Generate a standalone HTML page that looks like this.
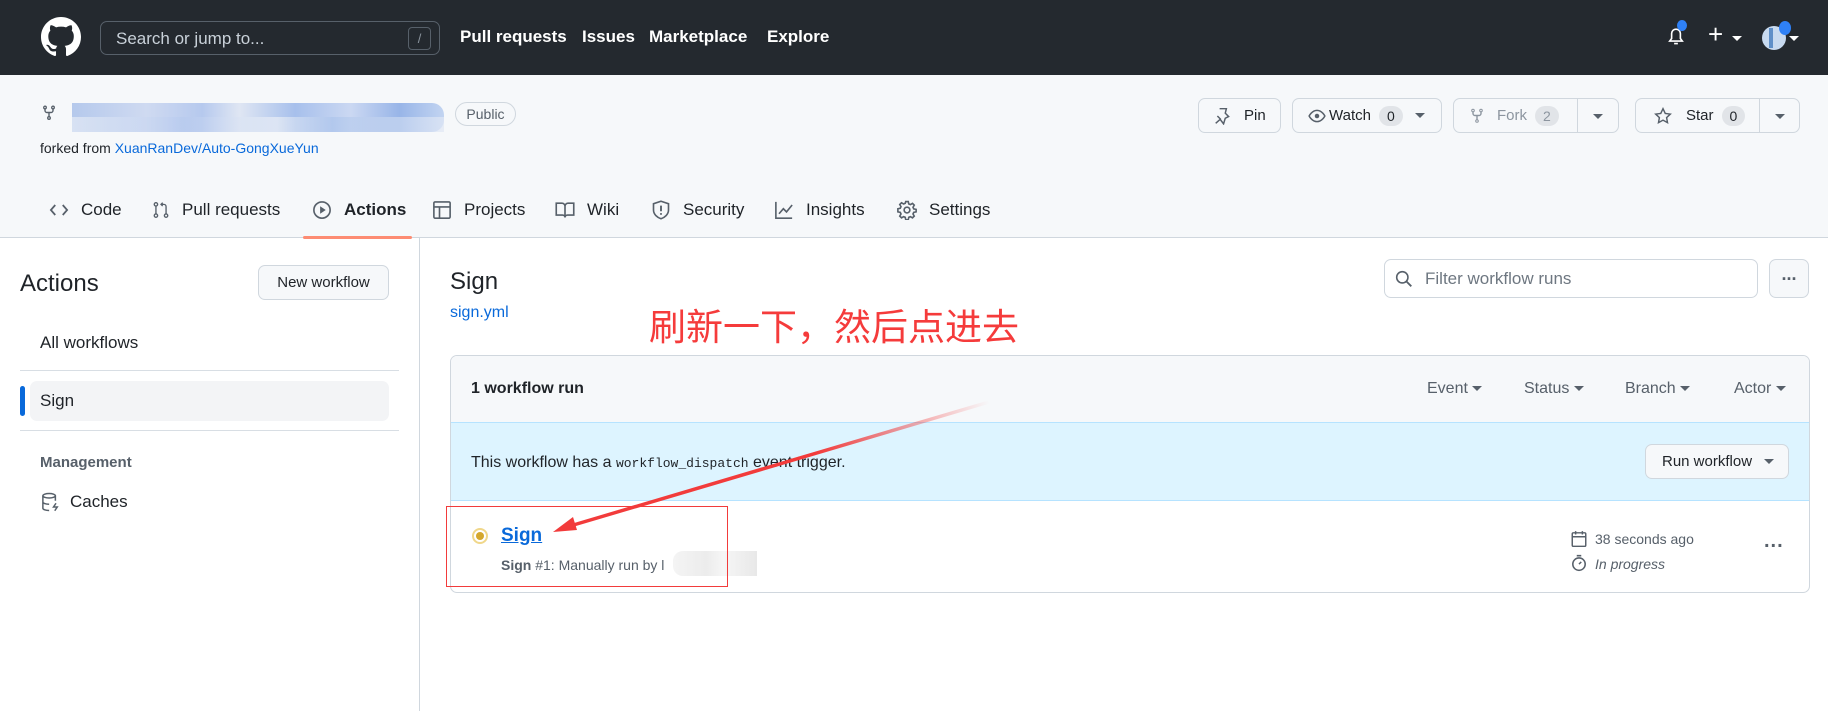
<!DOCTYPE html>
<html><head><meta charset="utf-8"><style>
*{box-sizing:border-box;margin:0;padding:0}
body{width:1828px;height:711px;overflow:hidden;background:#fff;font-family:"Liberation Sans","Noto Sans CJK SC",sans-serif;color:#1f2328;position:relative}
.a{position:absolute}
.hdr{left:0;top:0;width:1828px;height:75px;background:#24292f}
.nav{color:#fff;font-weight:bold;font-size:17px;top:27px}
.repo{left:0;top:75px;width:1828px;height:163px;background:#f6f8fa;border-bottom:1px solid #d0d7de}
.btn{background:#f6f8fa;border:1px solid #d0d7de;border-radius:7px;font-size:15px;display:flex;align-items:center}
.cnt{background:#e1e4e8;border-radius:12px;padding:2px 8px;font-size:14px;margin-left:8px}
.tab{top:200px;font-size:17px;color:#1f2328;display:flex;align-items:center;gap:12px}
svg{display:block}
.caret{width:0;height:0;border-left:5px solid transparent;border-right:5px solid transparent;border-top:5px solid #57606a;display:inline-block;vertical-align:middle}
.f{font-size:16px;color:#57606a;top:380px}
</style></head><body>
<div class="a hdr"></div>
<svg class="a" style="left:41px;top:17px" width="40" height="40" viewBox="0 0 16 16"><path fill="#fff" d="M8 0C3.58 0 0 3.58 0 8c0 3.54 2.290 6.53 5.47 7.59.4.07.55-.17.55-.38 0-.19-.01-.82-.01-1.490-2.010.37-2.530-.49-2.690-.94-.09-.23-.48-.94-.82-1.130-.28-.15-.68-.52-.01-.53.63-.01 1.080.58 1.230.82.72 1.210 1.870.87 2.330.66.07-.52.28-.87.51-1.070-1.780-.2-3.640-.89-3.640-3.950 0-.87.31-1.590.82-2.150-.08-.2-.36-1.020.08-2.120 0 0 .67-.21 2.200.82.64-.18 1.320-.27 2-.27.68 0 1.360.09 2 .27 1.530-1.040 2.200-.82 2.200-.82.44 1.100.16 1.920.08 2.120.51.56.82 1.270.82 2.150 0 3.070-1.870 3.750-3.650 3.950.29.25.54.73.54 1.480 0 1.070-.01 1.930-.01 2.200 0 .21.15.46.55.38A8.013 8.013 0 0016 8c0-4.420-3.580-8-8-8z"/></svg>
<div class="a" style="left:100px;top:21px;width:340px;height:34px;border:1px solid #57606a;border-radius:7px;color:#c9d1d9;font-size:17px;padding:7px 15px">Search or jump to...</div>
<div class="a" style="left:408px;top:27px;width:23px;height:23px;border:1px solid #57606a;border-radius:4px;color:#8b949e;font-size:13px;text-align:center;line-height:21px">/</div>
<div class="a nav" style="left:460px">Pull requests</div>
<div class="a nav" style="left:582px">Issues</div>
<div class="a nav" style="left:649px">Marketplace</div>
<div class="a nav" style="left:767px">Explore</div>
<svg class="a" style="left:1666px;top:24px" width="20" height="24" viewBox="0 0 16 16"><path fill="none" stroke="#fff" stroke-width="1.3" d="M3 12h10l-1.5-2V6a3.5 3.5 0 00-7 0v4zM6.5 14h3"/></svg>
<div class="a" style="left:1677px;top:20px;width:10px;height:11px;background:#2f81f7;border-radius:50%"></div>
<div class="a" style="left:1708px;top:19px;color:#fff;font-size:26px">+</div><div class="a caret" style="left:1732px;top:36px;border-top-color:#fff"></div>
<div class="a" style="left:1762px;top:26px;width:24px;height:24px;border-radius:50%;background:#c8daf0"></div>
<div class="a" style="left:1769px;top:28px;width:4px;height:20px;background:#5f8fc8"></div>
<div class="a" style="left:1779px;top:21px;width:12px;height:14px;background:#2f81f7;border-radius:50%"></div>
<div class="a caret" style="left:1789px;top:36px;border-top-color:#fff"></div>

<div class="a repo"></div>
<svg class="a" style="left:41px;top:104px" width="16" height="18" viewBox="0 0 16 16"><path fill="none" stroke="#57606a" stroke-width="1.4" d="M4 3.5v2a2 2 0 002 2h4a2 2 0 002-2v-2M8 7.5v4"/><circle cx="4" cy="2.5" r="1.3" fill="none" stroke="#57606a" stroke-width="1.3"/><circle cx="12" cy="2.5" r="1.3" fill="none" stroke="#57606a" stroke-width="1.3"/><circle cx="8" cy="13" r="1.3" fill="none" stroke="#57606a" stroke-width="1.3"/></svg>
<div class="a" style="left:72px;top:103px;width:372px;height:29px;border-radius:0 12px 12px 0;background:linear-gradient(90deg,#b5c9ec,#cfdaf1 20%,#b6c9ee 35%,#dfe6f3 45%,#a7c0ec 60%,#cbd8f2 75%,#98b5e8 88%,#c2d4f1)"></div>
<div class="a" style="left:72px;top:117px;width:372px;height:15px;background:linear-gradient(90deg,rgba(230,236,246,.7),rgba(180,200,238,.5) 30%,rgba(235,239,246,.7) 55%,rgba(170,195,235,.6) 70%,rgba(225,232,245,.7))"></div>
<div class="a" style="left:455px;top:102px;width:61px;height:24px;border:1px solid #d0d7de;border-radius:12px;font-size:14px;color:#57606a;text-align:center;line-height:22px">Public</div>
<div class="a" style="left:40px;top:140px;font-size:14px;color:#1f2328">forked from <span style="color:#0969da">XuanRanDev/Auto-GongXueYun</span></div>

<div class="a btn" style="left:1198px;top:98px;width:83px;height:35px;padding-left:15px"><svg width="18" height="18" viewBox="0 0 16 16"><path fill="none" stroke="#57606a" stroke-width="1.3" d="M5 1.5h6l-1 4 3 3-3 1.5-1.5 5L5.5 11 1.5 14.5M3 8l3 3"/></svg><span style="margin-left:12px">Pin</span></div>
<div class="a btn" style="left:1292px;top:98px;width:150px;height:35px;padding-left:15px"><svg width="18" height="18" viewBox="0 0 16 16"><path fill="none" stroke="#57606a" stroke-width="1.3" d="M1 8s2.5-5 7-5 7 5 7 5-2.5 5-7 5-7-5-7-5z"/><circle cx="8" cy="8" r="2" fill="#57606a"/></svg><span style="margin-left:3px">Watch</span><span class="cnt">0</span><span class="caret" style="margin-left:12px"></span></div>
<div class="a btn" style="left:1453px;top:98px;width:166px;height:35px;padding-left:15px;color:#8c959f"><svg width="16" height="18" viewBox="0 0 16 16"><path fill="none" stroke="#8c959f" stroke-width="1.4" d="M4 3.5v2a2 2 0 002 2h4a2 2 0 002-2v-2M8 7.5v4"/><circle cx="4" cy="2.5" r="1.3" fill="none" stroke="#8c959f"/><circle cx="12" cy="2.5" r="1.3" fill="none" stroke="#8c959f"/><circle cx="8" cy="13" r="1.3" fill="none" stroke="#8c959f"/></svg><span style="margin-left:12px">Fork</span><span class="cnt">2</span><span style="position:absolute;left:123px;top:0;height:33px;border-left:1px solid #d0d7de"></span><span class="caret" style="position:absolute;left:139px;top:15px"></span></div>
<div class="a btn" style="left:1635px;top:98px;width:165px;height:35px;padding-left:18px"><svg width="18" height="18" viewBox="0 0 16 16"><path fill="none" stroke="#57606a" stroke-width="1.3" d="M8 1.5l2 4.2 4.5.6-3.3 3.1.8 4.5L8 11.7 4 13.9l.8-4.5L1.5 6.3 6 5.7z"/></svg><span style="margin-left:14px">Star</span><span class="cnt">0</span><span style="position:absolute;left:123px;top:0;height:33px;border-left:1px solid #d0d7de"></span><span class="caret" style="position:absolute;left:139px;top:15px"></span></div>

<div class="a tab" style="left:49px"><svg width="20" height="20" viewBox="0 0 16 16"><path fill="none" stroke="#57606a" stroke-width="1.4" d="M5 4L1.5 8 5 12M11 4l3.5 4-3.5 4"/></svg>Code</div>
<div class="a tab" style="left:152px"><svg width="18" height="18" viewBox="0 0 16 16"><circle cx="3.5" cy="3" r="1.5" fill="none" stroke="#57606a" stroke-width="1.2"/><circle cx="3.5" cy="13" r="1.5" fill="none" stroke="#57606a" stroke-width="1.2"/><circle cx="12.5" cy="13" r="1.5" fill="none" stroke="#57606a" stroke-width="1.2"/><path fill="none" stroke="#57606a" stroke-width="1.2" d="M3.5 4.5v7M12.5 11.5V5a2 2 0 00-2-2H8M9.5 1.5L8 3l1.5 1.5"/></svg>Pull requests</div>
<div class="a tab" style="left:312px;font-weight:bold"><svg width="20" height="20" viewBox="0 0 16 16"><circle cx="8" cy="8" r="6.5" fill="none" stroke="#57606a" stroke-width="1.3"/><path d="M6.5 5v6l4.5-3z" fill="#57606a"/></svg>Actions</div>
<div class="a" style="left:303px;top:236px;width:109px;height:3px;background:#fd8c73;border-radius:2px"></div>
<div class="a tab" style="left:432px"><svg width="20" height="20" viewBox="0 0 16 16"><rect x="1.5" y="1.5" width="13" height="13" rx="1" fill="none" stroke="#57606a" stroke-width="1.3"/><path stroke="#57606a" stroke-width="1.3" d="M1.5 5.5h13M6 5.5v9"/></svg>Projects</div>
<div class="a tab" style="left:555px"><svg width="20" height="20" viewBox="0 0 16 16"><path fill="none" stroke="#57606a" stroke-width="1.3" d="M1 2.5h4.5A2.5 2.5 0 018 5v9a2 2 0 00-2-2H1zM15 2.5h-4.5A2.5 2.5 0 008 5v9a2 2 0 012-2h5z"/></svg>Wiki</div>
<div class="a tab" style="left:651px"><svg width="20" height="20" viewBox="0 0 16 16"><path fill="none" stroke="#57606a" stroke-width="1.3" d="M8 1l6 2v5c0 3.5-3 6-6 7-3-1-6-3.5-6-7V3z"/><path stroke="#57606a" stroke-width="1.5" d="M8 4.5v4.5M8 10.5v1.3"/></svg>Security</div>
<div class="a tab" style="left:774px"><svg width="20" height="20" viewBox="0 0 16 16"><path fill="none" stroke="#57606a" stroke-width="1.3" d="M1.5 1.5v13h13M4 11l3.5-4 2.5 2.5L14.5 4"/></svg>Insights</div>
<div class="a tab" style="left:897px"><svg width="20" height="20" viewBox="0 0 16 16"><circle cx="8" cy="8" r="2.3" fill="none" stroke="#57606a" stroke-width="1.3"/><path fill="none" stroke="#57606a" stroke-width="1.3" d="M7 1.2h2l.4 1.9 1.3.6 1.7-1 1.4 1.4-1 1.7.6 1.3 1.9.4v2l-1.9.4-.6 1.3 1 1.7-1.4 1.4-1.7-1-1.3.6-.4 1.9H7l-.4-1.9-1.3-.6-1.7 1-1.4-1.4 1-1.7-.6-1.3-1.9-.4V7l1.9-.4.6-1.3-1-1.7 1.4-1.4 1.7 1 1.3-.6z"/></svg>Settings</div>

<div class="a" style="left:419px;top:238px;width:1px;height:473px;background:#d0d7de"></div>
<div class="a" style="left:20px;top:270px;font-size:24px;font-weight:500">Actions</div>
<div class="a btn" style="left:258px;top:265px;width:131px;height:35px;justify-content:center;font-size:15px">New workflow</div>
<div class="a" style="left:40px;top:333px;font-size:17px">All workflows</div>
<div class="a" style="left:20px;top:370px;width:379px;height:1px;background:#d8dee4"></div>
<div class="a" style="left:30px;top:381px;width:359px;height:40px;background:#f3f4f6;border-radius:7px"></div>
<div class="a" style="left:20px;top:386px;width:5px;height:30px;background:#0969da;border-radius:3px"></div>
<div class="a" style="left:40px;top:391px;font-size:17px">Sign</div>
<div class="a" style="left:20px;top:430px;width:379px;height:1px;background:#d8dee4"></div>
<div class="a" style="left:40px;top:454px;font-size:15px;color:#57606a;font-weight:bold">Management</div>
<svg class="a" style="left:41px;top:492px" width="20" height="20" viewBox="0 0 16 16"><ellipse cx="6.5" cy="3" rx="5" ry="1.8" fill="none" stroke="#57606a" stroke-width="1.2"/><path fill="none" stroke="#57606a" stroke-width="1.2" d="M1.5 3v10c0 1 2.2 1.8 5 1.8M11.5 3v4M1.5 8c0 1 2.2 1.8 5 1.8M12 9l-2 3h3l-2 3"/></svg>
<div class="a" style="left:70px;top:492px;font-size:17px">Caches</div>

<div class="a" style="left:450px;top:268px;font-size:24px">Sign</div>
<div class="a" style="left:450px;top:304px;font-size:16px;color:#0969da">sign.yml</div>
<div class="a" style="left:649px;top:297px;font-size:37px;color:#f53b3b;font-family:'Noto Sans CJK SC',sans-serif;letter-spacing:0px">刷新一下，然后点进去</div>
<div class="a" style="left:1384px;top:259px;width:374px;height:39px;border:1px solid #d0d7de;border-radius:7px;background:#fff"></div>
<svg class="a" style="left:1395px;top:270px" width="18" height="18" viewBox="0 0 16 16"><circle cx="6.5" cy="6.5" r="5" fill="none" stroke="#57606a" stroke-width="1.4"/><path stroke="#57606a" stroke-width="1.6" d="M10 10l4.5 4.5"/></svg>
<div class="a" style="left:1425px;top:269px;font-size:17px;color:#6e7781">Filter workflow runs</div>
<div class="a btn" style="left:1769px;top:259px;width:40px;height:39px;justify-content:center;color:#57606a;font-size:18px;font-weight:bold;padding-bottom:8px">...</div>

<div class="a" style="left:450px;top:355px;width:1360px;height:238px;border:1px solid #d0d7de;border-radius:7px;overflow:hidden">
 <div style="height:67px;background:#f6f8fa;border-bottom:1px solid #b6e3ff"></div>
 <div style="height:78px;background:#ddf4ff;border-bottom:1px solid #b6e3ff"></div>
</div>
<div class="a" style="left:471px;top:380px;font-size:16px;font-weight:bold">1 workflow run</div>
<div class="a f" style="left:1427px">Event <span class="caret"></span></div>
<div class="a f" style="left:1524px">Status <span class="caret"></span></div>
<div class="a f" style="left:1625px">Branch <span class="caret"></span></div>
<div class="a f" style="left:1734px">Actor <span class="caret"></span></div>
<div class="a" style="left:471px;top:454px;font-size:16px">This workflow has a <span style="font-family:'Liberation Mono',monospace;font-size:13px">workflow_dispatch</span> event trigger.</div>
<div class="a btn" style="left:1645px;top:444px;width:144px;height:35px;padding-left:16px;font-size:15px">Run workflow<span class="caret" style="margin-left:12px"></span></div>

<div class="a" style="left:472px;top:528px;width:16px;height:16px;border-radius:50%;border:2px solid #f0d78a;background:#fff"></div>
<div class="a" style="left:476px;top:532px;width:8px;height:8px;border-radius:50%;background:#d4a72c"></div>
<div class="a" style="left:501px;top:525px;font-size:19px;font-weight:bold;color:#0969da;text-decoration:underline">Sign</div>
<div class="a" style="left:501px;top:557px;font-size:14px;color:#57606a"><b>Sign</b> #1: Manually run by l</div>
<div class="a" style="left:673px;top:551px;width:84px;height:25px;background:linear-gradient(90deg,#f4f4f4,#ececec 40%,#f6f6f6 60%,#e8e8e8);border-radius:10px 0 0 10px"></div>
<div class="a" style="left:446px;top:506px;width:282px;height:81px;border:1.5px solid #f23b3b"></div>
<svg class="a" style="left:1570px;top:529px" width="18" height="20" viewBox="0 0 16 16"><rect x="2" y="2.5" width="12" height="12" rx="1" fill="none" stroke="#57606a" stroke-width="1.3"/><path stroke="#57606a" stroke-width="1.3" d="M2 6h12M5 1v3M11 1v3"/></svg>
<div class="a" style="left:1595px;top:531px;font-size:14px;color:#57606a">38 seconds ago</div>
<svg class="a" style="left:1570px;top:553px" width="18" height="20" viewBox="0 0 16 16"><circle cx="8" cy="9" r="5.5" fill="none" stroke="#57606a" stroke-width="1.4"/><path stroke="#57606a" stroke-width="1.4" d="M6 1.5h4M8 9l2-2"/></svg>
<div class="a" style="left:1595px;top:556px;font-size:14px;color:#57606a;font-style:italic">In progress</div>
<div class="a" style="left:1764px;top:530px;font-size:20px;color:#57606a;font-weight:bold;letter-spacing:1px">...</div>

<svg class="a" style="left:0;top:0" width="1828" height="711"><defs><linearGradient id="g" x1="989" y1="402" x2="555" y2="530" gradientUnits="userSpaceOnUse"><stop offset="0" stop-color="#f23b3b" stop-opacity="0"/><stop offset=".4" stop-color="#f23b3b"/></linearGradient></defs><path d="M989 402L570 526" stroke="url(#g)" stroke-width="3.5"/><path d="M553 532l20-15 4 13z" fill="#f23b3b"/></svg>
</body></html>
